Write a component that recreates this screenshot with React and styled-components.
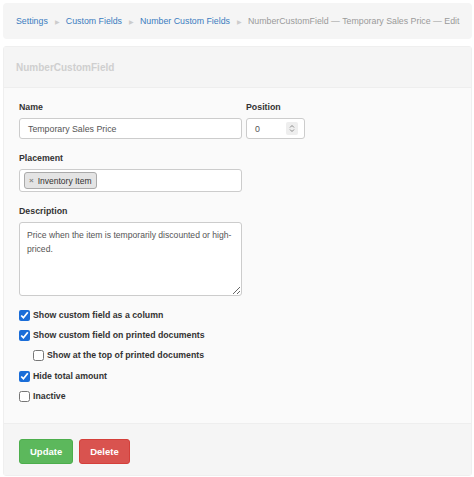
import React from "react";
import styled, { createGlobalStyle } from "styled-components";

const GlobalStyle = createGlobalStyle`
  html, body {
    margin: 0;
    padding: 0;
    background: #fff;
  }
  body {
    font-family: "Liberation Sans", Arial, sans-serif;
    color: #333;
  }
`;

const Page = styled.div`
  padding: 3px 2px 2px 3px;
  display: flex;
  flex-direction: column;
  gap: 7px;
`;

const Breadcrumb = styled.ol`
  list-style: none;
  margin: 0;
  padding: 0 13px;
  height: 36px;
  display: flex;
  align-items: center;
  background: #f5f5f5;
  border-radius: 4px;
  font-size: 8.8px;
  white-space: nowrap;
  overflow: hidden;
`;

const Crumb = styled.li`
  color: ${(p) => (p.$active ? "#9a9a9a" : "#3a7cc0")};
  display: flex;
  align-items: center;
`;

const Sep = styled.span`
  color: #ccc;
  font-size: 6px;
  margin: 0 6px 0 7px;
`;

const Panel = styled.div`
  background: #fafafa;
  border: 1px solid #efefef;
  border-radius: 3px;
  display: flex;
  flex-direction: column;
  height: 428px;
`;

const PanelHeading = styled.div`
  height: 40px;
  padding: 0 12px;
  display: flex;
  align-items: center;
  background: #f5f5f5;
  border-bottom: 1px solid #eee;
  color: #cfcfcf;
  font-weight: bold;
  font-size: 10px;
`;

const PanelBody = styled.div`
  flex: 1;
  padding: 13px 15px 0;
`;

const Row = styled.div`
  display: flex;
  gap: 4px;
  margin-bottom: 13px;
`;

const Field = styled.div`
  display: flex;
  flex-direction: column;
  width: ${(p) => p.$width}px;
`;

const Label = styled.label`
  font-weight: bold;
  font-size: 8.8px;
  color: #333;
  line-height: 12px;
  margin-bottom: 5px;
`;

const Input = styled.div`
  height: 21px;
  box-sizing: border-box;
  border: 1px solid #ccc;
  border-radius: 3px;
  background: #fff;
  display: flex;
  align-items: center;
  justify-content: space-between;
  padding: 0 8px;
  font-size: 8.8px;
  color: #555;
`;

const Spinner = styled.span`
  width: 12px;
  height: 13px;
  border-radius: 2px;
  background: #eee;
  display: flex;
  align-items: center;
  justify-content: center;
  margin-right: -2px;
`;

const TagBox = styled.div`
  height: 23px;
  box-sizing: border-box;
  border: 1px solid #ccc;
  border-radius: 3px;
  background: #fff;
  display: flex;
  align-items: center;
  padding: 0 4px;
`;

const Tag = styled.span`
  display: inline-flex;
  align-items: center;
  gap: 4px;
  height: 15px;
  padding: 0 4px;
  border: 1px solid #aaa;
  border-radius: 3px;
  background: #e4e4e4;
  font-size: 8.5px;
  color: #333;
`;

const TagRemove = styled.span`
  color: #888;
  font-weight: bold;
  font-size: 8px;
`;

const TextArea = styled.textarea`
  height: 74px;
  box-sizing: border-box;
  border: 1px solid #ccc;
  border-radius: 3px;
  background: #fff;
  padding: 5px 6px 5px 7px;
  font-family: "Liberation Sans", Arial, sans-serif;
  font-size: 8.6px;
  line-height: 14px;
  color: #555;
  resize: vertical;
  outline: none;
`;

const Checks = styled.div`
  margin-top: -4px;
  display: flex;
  flex-direction: column;
`;

const CheckRow = styled.label`
  display: flex;
  align-items: center;
  gap: 3px;
  height: 20px;
  padding-left: ${(p) => (p.$indent ? 14 : 0)}px;
  margin-top: ${(p) => (p.$spaced ? 1 : 0)}px;
  font-weight: bold;
  font-size: 8.75px;
  color: #333;
`;

const Box = styled.input`
  width: 11px;
  height: 11px;
  margin: 0;
  accent-color: #1a6dd8;
`;

const PanelFooter = styled.div`
  height: 52px;
  box-sizing: border-box;
  padding: 15px 15px 0;
  background: #f5f5f5;
  border-top: 1px solid #eee;
  display: flex;
  align-items: flex-start;
  gap: 6px;
`;

const Button = styled.button`
  height: 25px;
  padding: 0 10px;
  border: 1px solid ${(p) => (p.$danger ? "#d43f3a" : "#4cae4c")};
  border-radius: 3px;
  background: ${(p) => (p.$danger ? "#d9534f" : "#5cb85c")};
  color: #fff;
  font-family: "Liberation Sans", Arial, sans-serif;
  font-weight: bold;
  font-size: 9.5px;
`;

const checks = [
  { label: "Show custom field as a column", checked: true },
  { label: "Show custom field on printed documents", checked: true },
  { label: "Show at the top of printed documents", checked: false, indent: true },
  { label: "Hide total amount", checked: true, spaced: true },
  { label: "Inactive", checked: false },
];

export default function App() {
  return (
    <>
      <GlobalStyle />
      <Page>
        <Breadcrumb>
          <Crumb>Settings</Crumb>
          <Sep>▶</Sep>
          <Crumb>Custom Fields</Crumb>
          <Sep>▶</Sep>
          <Crumb>Number Custom Fields</Crumb>
          <Sep>▶</Sep>
          <Crumb $active>NumberCustomField — Temporary Sales Price — Edit</Crumb>
        </Breadcrumb>
        <Panel>
          <PanelHeading>NumberCustomField</PanelHeading>
          <PanelBody>
            <Row>
              <Field $width={223}>
                <Label>Name</Label>
                <Input>Temporary Sales Price</Input>
              </Field>
              <Field $width={59}>
                <Label>Position</Label>
                <Input>
                  0
                  <Spinner>
                    <svg width="6" height="9" viewBox="0 0 6 9" fill="none" stroke="#888" strokeWidth="1">
                      <path d="M1 3.5 L3 1.5 L5 3.5" />
                      <path d="M1 5.5 L3 7.5 L5 5.5" />
                    </svg>
                  </Spinner>
                </Input>
              </Field>
            </Row>
            <Row>
              <Field $width={223}>
                <Label>Placement</Label>
                <TagBox>
                  <Tag>
                    <TagRemove>×</TagRemove>
                    Inventory Item
                  </Tag>
                </TagBox>
              </Field>
            </Row>
            <Row>
              <Field $width={223}>
                <Label>Description</Label>
                <TextArea
                  readOnly
                  defaultValue="Price when the item is temporarily discounted or high-priced."
                />
              </Field>
            </Row>
            <Checks>
              {checks.map((c) => (
                <CheckRow key={c.label} $indent={c.indent} $spaced={c.spaced}>
                  <Box type="checkbox" defaultChecked={c.checked} />
                  {c.label}
                </CheckRow>
              ))}
            </Checks>
          </PanelBody>
          <PanelFooter>
            <Button>Update</Button>
            <Button $danger>Delete</Button>
          </PanelFooter>
        </Panel>
      </Page>
    </>
  );
}
